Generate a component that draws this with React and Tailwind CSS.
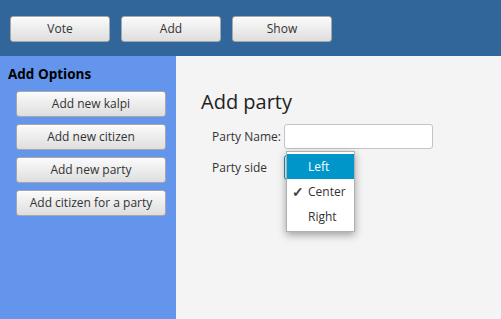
import React from 'react'

const font = { fontFamily: '"Segoe UI", "Open Sans", sans-serif' }

const Btn = ({ children, className }) => (
    <div className={"h-[26px] shrink-0 flex items-center justify-center rounded-[3px] border border-[#a7a7a7] bg-gradient-to-b from-[#fbfbfb] to-[#dedede] text-[12px] text-[#333] whitespace-nowrap shadow-[inset_0_1px_0_#fff] " + className}>
        {children}
    </div>
)

const App = () => {
    return (
        <div className="w-[501px] h-[319px] flex flex-col bg-[#f4f4f4]" style={font}>
            <div className="h-[56px] shrink-0 bg-[#31669a] flex items-start gap-[11px] pl-[10px] pt-[16px]">
                <Btn className="w-[100px]">Vote</Btn>
                <Btn className="w-[100px]">Add</Btn>
                <Btn className="w-[100px]">Show</Btn>
            </div>
            <div className="flex flex-1">
                <div className="w-[176px] shrink-0 bg-[#6495ed] pt-[10px]">
                    <h1 className="pl-[8px] text-[13.5px] font-bold text-black leading-[17px]">Add Options</h1>
                    <div className="flex flex-col gap-[7px] pl-[16px] mt-[8px]">
                        <Btn className="w-[150px]">Add new kalpi</Btn>
                        <Btn className="w-[150px]">Add new citizen</Btn>
                        <Btn className="w-[150px]">Add new party</Btn>
                        <Btn className="w-[150px]">Add citizen for a party</Btn>
                    </div>
                </div>
                <div className="flex-1 pl-[25px] pt-[33px] text-[#333]">
                    <h1 className="text-[20px] leading-[26px] text-[#222]">Add party</h1>
                    <div className="pl-[11px] mt-[9px]">
                        <div className="flex items-center">
                            <span className="text-[12px] w-[72px] whitespace-nowrap">Party Name:</span>
                            <div className="w-[149px] h-[25px] rounded-[3px] border border-[#c4c4c4] bg-white"></div>
                        </div>
                        <div className="flex items-center mt-[6px]">
                            <span className="text-[12px] w-[72px] whitespace-nowrap">Party side</span>
                            <div className="relative w-[40px] h-[25px]">
                                <div className="absolute left-0 top-0 w-[6px] h-[25px] rounded-l-[3px] border border-[#0096c9] bg-white"></div>
                                <div className="absolute left-[2px] top-[-4px] w-[69px] bg-white border border-[#b0b0b0] shadow-[0_3px_8px_rgba(0,0,0,0.35)] py-[2px] text-[12px] z-10">
                                    <div className="h-[25px] bg-[#0096c9] text-white flex items-center pl-[21px]">Left</div>
                                    <div className="h-[25px] flex items-center pl-[5px]"><span className="w-[16px] text-[14px] font-bold text-[#444]">✓</span>Center</div>
                                    <div className="h-[25px] flex items-center pl-[21px]">Right</div>
                                </div>
                            </div>
                        </div>
                    </div>
                </div>
            </div>
        </div>
    )
}

export default App
